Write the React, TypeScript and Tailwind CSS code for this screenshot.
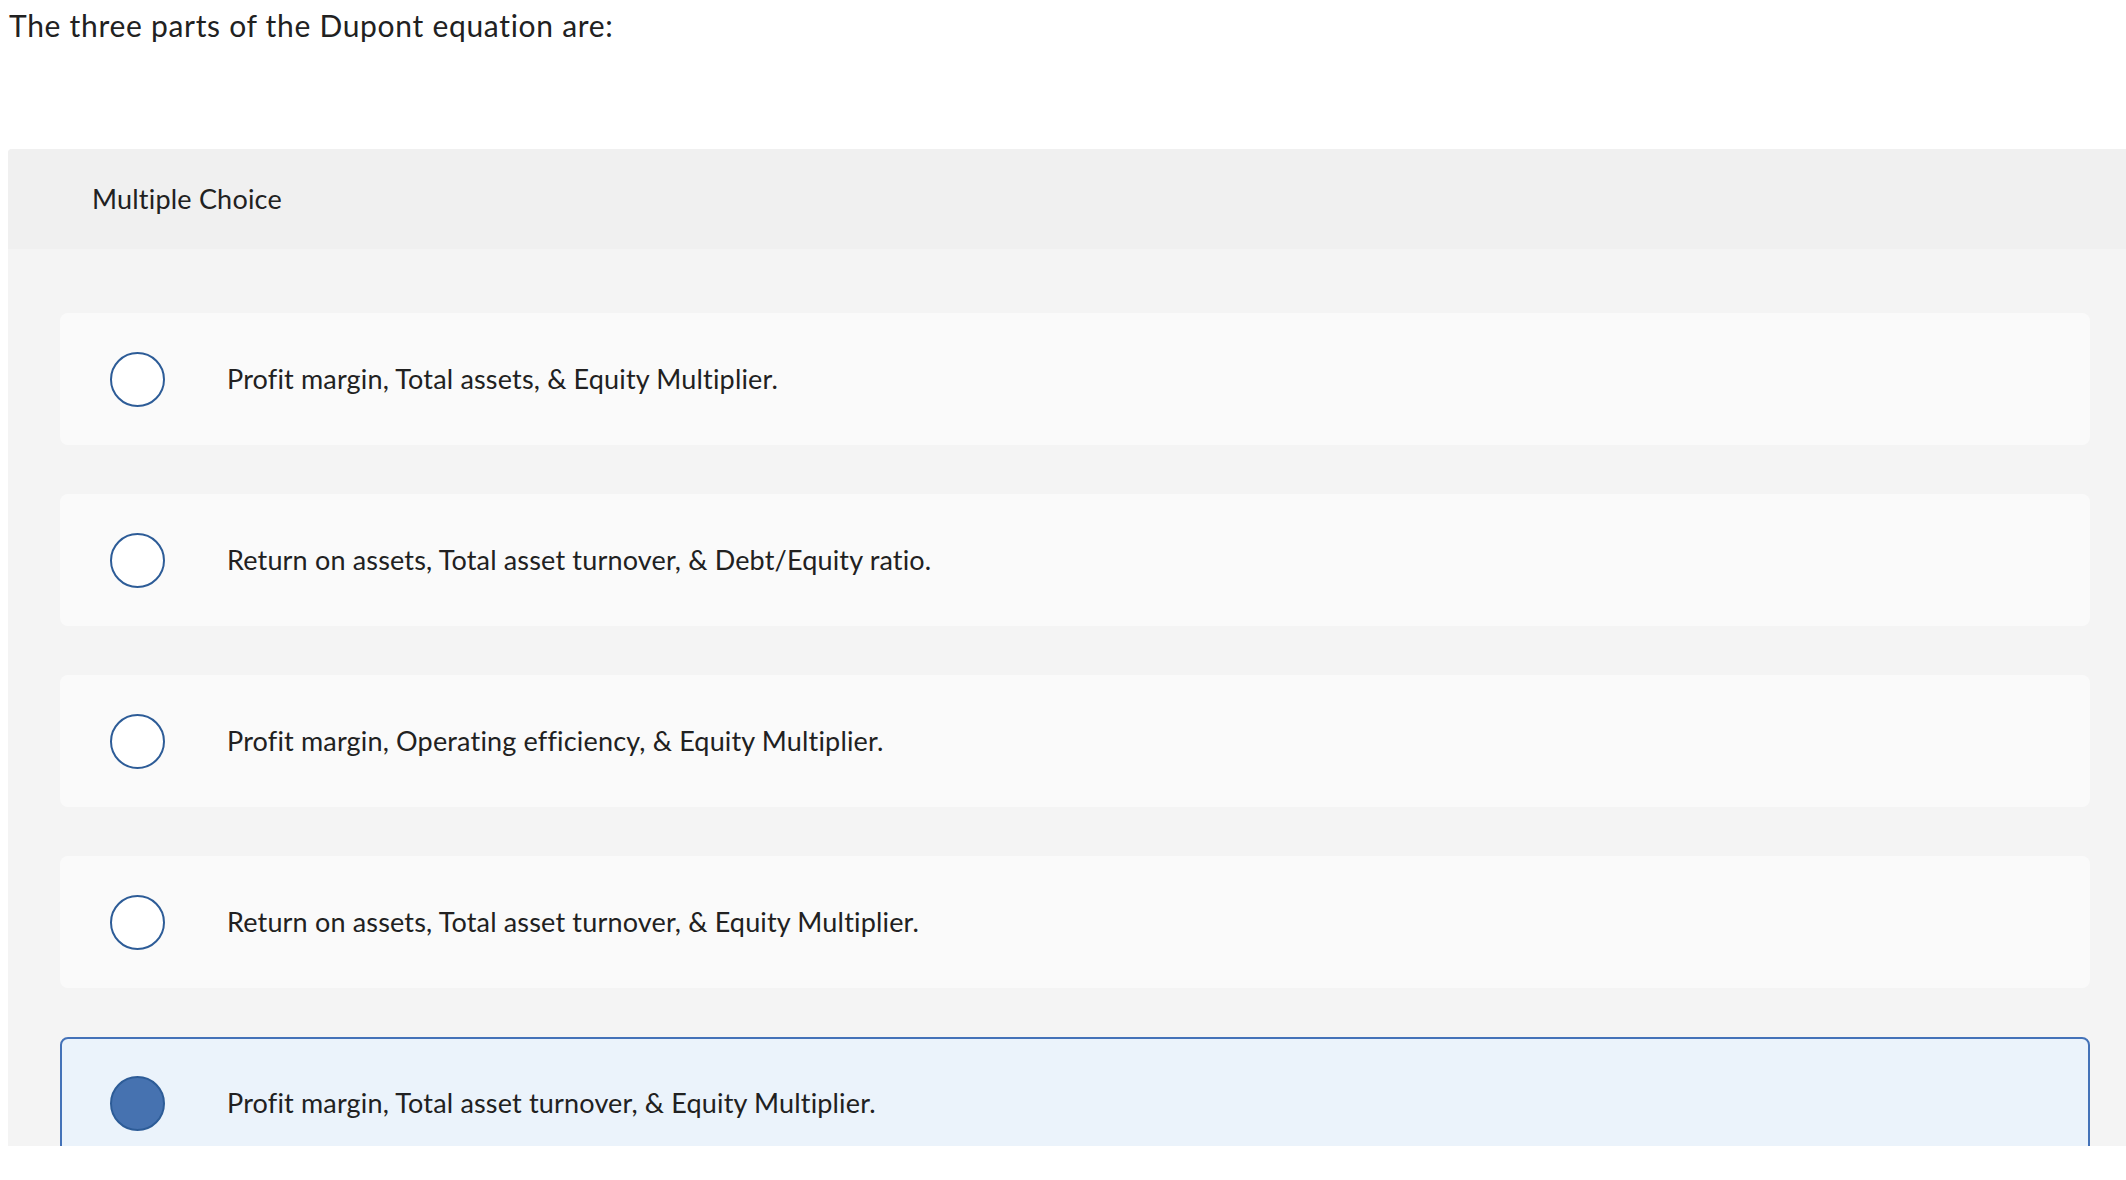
const options = [
  'Profit margin, Total assets, & Equity Multiplier.',
  'Return on assets, Total asset turnover, & Debt/Equity ratio.',
  'Profit margin, Operating efficiency, & Equity Multiplier.',
  'Return on assets, Total asset turnover, & Equity Multiplier.',
  'Profit margin, Total asset turnover, & Equity Multiplier.',
];

const selected = 4;

const App = () => {
  return (
    <div className="h-[1180px] w-[2126px] overflow-hidden bg-white text-[#212121] font-['Lato','Liberation_Sans',sans-serif] [font-variant-ligatures:none]">
      <p className="pl-[9px] pt-[7px] text-[30px] leading-[36px] tracking-[0.7px]">The three parts of the Dupont equation are:</p>

      <div className="ml-[8px] mt-[106px] h-[997px] overflow-hidden rounded-tl-[4px] bg-[#f4f4f4]">
        <div className="flex h-[100px] items-center bg-[#f0f0f0] pl-[84px] text-[27px] tracking-[0.2px]">Multiple Choice</div>

        <div className="flex flex-col gap-[49px] pl-[52px] pr-[36px] pt-[64px]">
          {options.map((text, i) => {
            const isSelected = i === selected;
            return (
              <div
                key={i}
                className={
                  isSelected
                    ? 'flex h-[132px] shrink-0 items-center gap-[62px] rounded-[8px] border-2 border-[#4472b8] bg-[#ebf3fb] pl-[48px]'
                    : 'flex h-[132px] shrink-0 items-center gap-[62px] rounded-[8px] bg-[#fafafa] pl-[50px]'
                }
              >
                <span
                  className={
                    isSelected
                      ? 'h-[55px] w-[55px] shrink-0 rounded-full border-2 border-[#2d5c97] bg-[#4672b0]'
                      : 'h-[55px] w-[55px] shrink-0 rounded-full border-2 border-[#2d5c97] bg-white'
                  }
                />
                <span className="text-[27px] tracking-[0.17px]">{text}</span>
              </div>
            );
          })}
        </div>
      </div>
    </div>
  );
};

export default App;
